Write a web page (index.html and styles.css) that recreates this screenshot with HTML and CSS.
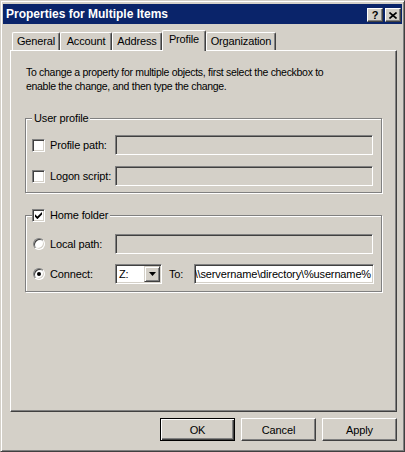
FILE: index.html
```html
<!DOCTYPE html>
<html lang="en">
<head>
    <meta charset="UTF-8">
    <title>Properties for Multiple Items</title>
    <link rel="stylesheet" href="styles.css">
</head>
<body>
    <div class="window">
        <div class="titlebar">
            <span class="title">Properties for Multiple Items</span>
            <div class="caption-buttons">
                <span class="cbtn help">?</span>
                <span class="cbtn close">
                    <svg width="8" height="7" viewBox="0 0 8 7"><path d="M0.5 0.5L7.5 6.5M7.5 0.5L0.5 6.5" stroke="#000" stroke-width="1.6"/></svg>
                </span>
            </div>
        </div>
        <div class="tabs">
            <span class="tab tab-general">General</span>
            <span class="tab tab-account">Account</span>
            <span class="tab tab-address">Address</span>
            <span class="tab tab-profile active">Profile</span>
            <span class="tab tab-org">Organization</span>
        </div>
        <div class="panel">
            <p class="intro">To change a property for multiple objects, first select the checkbox to<br>enable the change, and then type the change.</p>

            <div class="group group-user">
                <div class="group-caption">User profile</div>
                <div class="row row-first">
                    <span class="check"></span>
                    <span class="label">Profile path:</span>
                    <span class="edit"></span>
                </div>
                <div class="row row-second">
                    <span class="check"></span>
                    <span class="label">Logon script:</span>
                    <span class="edit"></span>
                </div>
            </div>

            <div class="group group-home">
                <div class="group-caption caption-check">
                    <span class="check">
                        <svg width="7" height="7" viewBox="0 0 7 7"><path d="M0 2.2L2.4 4.6L7 0V2.6L2.4 7.2L0 4.8Z" fill="#000"/></svg>
                    </span>
                    <span class="caption-text">Home folder</span>
                </div>
                <div class="row row-local">
                    <span class="radio"></span>
                    <span class="label">Local path:</span>
                    <span class="edit"></span>
                </div>
                <div class="row row-connect">
                    <span class="radio on"></span>
                    <span class="label">Connect:</span>
                    <span class="combo">
                        <span class="combo-value">Z:</span>
                        <span class="drop">
                            <svg width="7" height="4" viewBox="0 0 7 4"><path d="M0 0H7L3.5 4Z" fill="#000"/></svg>
                        </span>
                    </span>
                    <span class="to-label">To:</span>
                    <span class="edit edit-to"><span class="to-value">\\servername\directory\%username%</span></span>
                </div>
            </div>
        </div>
        <div class="buttons">
            <span class="btn default">OK</span>
            <span class="btn">Cancel</span>
            <span class="btn">Apply</span>
        </div>
    </div>
</body>
</html>
```

FILE: styles.css
```css
body {
    margin: 0;
    font-family: "Liberation Sans", Arial, sans-serif;
    font-size: 11px;
    letter-spacing: -0.15px;
    color: #000000;
}
.window {
    box-sizing: border-box;
    width: 405px;
    height: 452px;
    background: #D4D0C8;
    border: 1px solid;
    border-color: #D4D0C8 #404040 #404040 #D4D0C8;
    box-shadow: inset 1px 1px #FFFFFF, inset -1px -1px #808080;
    padding: 3px 2px 2px 2px;
    display: flex;
    flex-direction: column;
}
/* title bar */
.titlebar {
    height: 20px;
    background: #0A246A;
    color: #FFFFFF;
    display: flex;
    align-items: center;
    padding-left: 3px;
}
.title {
    font-weight: bold;
    font-size: 12px;
    letter-spacing: 0;
}
.caption-buttons {
    margin-left: auto;
    margin-right: 1px;
    align-self: flex-start;
    margin-top: 4px;
    display: flex;
    gap: 2px;
}
.cbtn {
    box-sizing: border-box;
    width: 16px;
    height: 14px;
    background: #D4D0C8;
    border: 1px solid;
    border-color: #FFFFFF #404040 #404040 #FFFFFF;
    box-shadow: inset -1px -1px #808080;
    display: flex;
    align-items: center;
    justify-content: center;
    color: #000000;
}
.help {
    font-weight: bold;
    font-size: 11px;
    letter-spacing: 0;
    line-height: 12px;
}
/* tabs */
.tabs {
    display: flex;
    align-items: flex-end;
    margin: 6px 0 0 9px;
}
.tab {
    box-sizing: border-box;
    height: 18px;
    line-height: 16px;
    text-align: center;
    border-top: 1px solid #FFFFFF;
    border-left: 1px solid #FFFFFF;
    border-right: 1px solid #404040;
    box-shadow: inset -1px 0 #808080;
    border-radius: 2px 2px 0 0;
}
.tab-general { width: 48px; }
.tab-account { width: 52px; }
.tab-address { width: 50px; }
.tab-profile { width: 44px; }
.tab-org { width: 70px; }
.tab.active {
    height: 21px;
    line-height: 17px;
    margin-bottom: -1px;
    background: #D4D0C8;
    position: relative;
    z-index: 1;
}
/* page panel */
.panel {
    box-sizing: border-box;
    width: 387px;
    height: 362px;
    margin-left: 7px;
    border-top: 1px solid #FFFFFF;
    border-left: 1px solid #FFFFFF;
    border-right: 1px solid #404040;
    border-bottom: 1px solid #404040;
    box-shadow: inset -1px -1px #808080;
    padding: 14px 0 0 14px;
}
.intro {
    margin: 0;
    padding-left: 1px;
    line-height: 14px;
    font-size: 10.5px;
    letter-spacing: -0.3px;
}
.group {
    box-sizing: border-box;
    width: 357px;
    border: 1px solid #808080;
    box-shadow: inset 1px 1px #FFFFFF, 1px 1px #FFFFFF;
    padding: 0 6px 6px 6px;
}
.group-user {
    margin-top: 25px;
}
.group-home {
    margin-top: 22px;
    padding-bottom: 7px;
}
.group-caption {
    margin-top: -7px;
    width: fit-content;
    background: #D4D0C8;
    padding: 0 2px;
    line-height: 13px;
    height: 13px;
}
.caption-check {
    display: flex;
    align-items: center;
    padding-left: 0;
}
.caption-text {
    margin-left: 5px;
}
.row {
    display: flex;
    align-items: center;
    height: 20px;
}
.row-first { margin-top: 10px; }
.row-second { margin-top: 11px; }
.row-local { margin-top: 12px; }
.row-connect { margin-top: 10px; }
.check {
    box-sizing: border-box;
    width: 13px;
    height: 13px;
    flex-shrink: 0;
    background: #FFFFFF;
    border: 1px solid;
    border-color: #808080 #FFFFFF #FFFFFF #808080;
    box-shadow: inset 1px 1px #404040, inset -1px -1px #D4D0C8;
    display: flex;
    align-items: center;
    justify-content: center;
}
.radio {
    box-sizing: border-box;
    width: 12px;
    height: 12px;
    margin-left: 1px;
    flex-shrink: 0;
    border-radius: 50%;
    background: #FFFFFF;
    border: 1px solid;
    border-color: #808080 #FFFFFF #FFFFFF #808080;
    box-shadow: inset 1px 1px #404040, inset -1px -1px #D4D0C8;
    display: flex;
    align-items: center;
    justify-content: center;
}
.radio.on::after {
    content: "";
    width: 4px;
    height: 4px;
    border-radius: 50%;
    background: #000000;
}
.label {
    width: 65px;
    margin-left: 5px;
    flex-shrink: 0;
    white-space: nowrap;
}
.edit {
    box-sizing: border-box;
    width: 258px;
    height: 20px;
    flex-shrink: 0;
    background: #D4D0C8;
    border: 1px solid;
    border-color: #808080 #FFFFFF #FFFFFF #808080;
    box-shadow: inset 1px 1px #404040, inset -1px -1px #D4D0C8;
}
.combo {
    box-sizing: border-box;
    width: 47px;
    height: 20px;
    flex-shrink: 0;
    background: #FFFFFF;
    border: 1px solid;
    border-color: #808080 #FFFFFF #FFFFFF #808080;
    box-shadow: inset 1px 1px #404040, inset -1px -1px #D4D0C8;
    padding: 2px 1px 2px 2px;
    display: flex;
    align-items: center;
}
.combo-value {
    padding-left: 1px;
}
.drop {
    box-sizing: border-box;
    margin-left: auto;
    width: 16px;
    height: 16px;
    background: #D4D0C8;
    border: 1px solid;
    border-color: #D4D0C8 #404040 #404040 #D4D0C8;
    box-shadow: inset 1px 1px #FFFFFF, inset -1px -1px #808080;
    display: flex;
    align-items: center;
    justify-content: center;
}
.to-label {
    width: 25px;
    margin-left: 7px;
    flex-shrink: 0;
}
.edit-to {
    width: 180px;
    background: #FFFFFF;
    overflow: hidden;
    white-space: nowrap;
    display: flex;
    align-items: center;
    justify-content: flex-end;
    padding-right: 2px;
}
.to-value {
    letter-spacing: -0.14px;
}
/* dialog buttons */
.buttons {
    width: 387px;
    margin: 6px 0 0 7px;
    display: flex;
    justify-content: flex-end;
    gap: 6px;
}
.btn {
    box-sizing: border-box;
    width: 75px;
    height: 23px;
    border: 1px solid;
    border-color: #FFFFFF #404040 #404040 #FFFFFF;
    box-shadow: inset -1px -1px #808080;
    display: flex;
    align-items: center;
    justify-content: center;
}
.btn.default {
    border: 1px solid #000000;
    box-shadow: inset 1px 1px #FFFFFF, inset -1px -1px #404040, inset -2px -2px #808080;
}
```
